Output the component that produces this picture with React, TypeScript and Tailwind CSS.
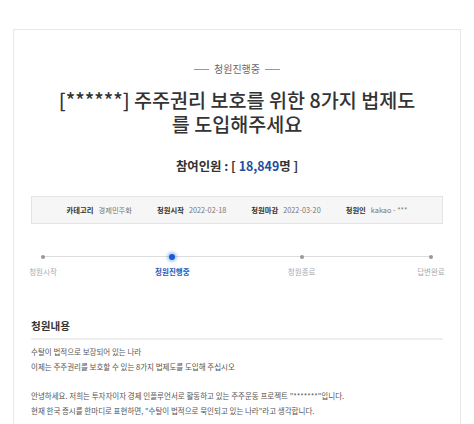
import React from "react";

const font = { fontFamily: '"Noto Sans CJK KR", "Noto Sans", sans-serif' };

function InfoItem({ label, value }: { label: string; value: string }) {
  return (
    <div className="flex items-center gap-[5px] whitespace-nowrap">
      <span className="font-bold text-[#333]">{label}</span>
      <span className="text-[#777]">{value}</span>
    </div>
  );
}

function Step({ label, active }: { label: string; active?: boolean }) {
  return (
    <div className="relative flex w-[40px] flex-col items-center">
      <div className="flex h-[9px] items-center justify-center">
        {active ? (
          <span className="block h-[6px] w-[6px] rounded-full bg-[#1d5ad0] shadow-[0_0_3px_2px_rgba(80,140,235,0.45)]" />
        ) : (
          <span className="block h-[4px] w-[4px] rounded-full bg-[#999]" />
        )}
      </div>
      <span
        className={
          active
            ? "mt-[6px] whitespace-nowrap text-[7.5px] leading-[10px] font-bold text-[#2b5bb8]"
            : "mt-[6px] whitespace-nowrap text-[7.5px] leading-[10px] text-[#aaa]"
        }
      >
        {label}
      </span>
    </div>
  );
}

export default function App() {
  return (
    <div className="h-[424px] w-[474px] overflow-hidden bg-white" style={font}>
      <div className="mx-[13px] mt-[29px] h-[400px] border border-b-0 border-[#e8e8e8] bg-white pt-[32px]">
        <div className="flex items-center justify-center gap-[5px] text-[10px] leading-[14px] text-[#666]">
          <span className="block h-px w-[15px] bg-[#999]" />
          <span>청원진행중</span>
          <span className="block h-px w-[15px] bg-[#999]" />
        </div>
        <h1 className="mt-[12px] text-center text-[19.6px] font-medium leading-[24px] text-[#333]">
          <span className="block">[******] 주주권리 보호를 위한 8가지 법제도</span>
          <span className="block">를 도입해주세요</span>
        </h1>
        <div className="mt-[21px] text-center text-[12.4px] font-bold leading-[18px] text-[#333]">
          참여인원 : [ <span className="text-[#1f4f9e]">18,849</span>명 ]
        </div>
        <div className="mx-[17px] mt-[21px] flex h-[28px] items-center justify-center gap-[25px] border border-[#e4e4e4] bg-[#f6f6f6] text-[7.3px]">
          <InfoItem label="카테고리" value="경제민주화" />
          <InfoItem label="청원시작" value="2022-02-18" />
          <InfoItem label="청원마감" value="2022-03-20" />
          <InfoItem label="청원인" value="kakao - ***" />
        </div>
        <div className="relative mx-[9px] mt-[28px] flex justify-between">
          <div className="absolute left-[20px] right-[20px] top-[4px] h-px bg-[#ddd]" />
          <Step label="청원시작" />
          <Step label="청원진행중" active />
          <Step label="청원종료" />
          <Step label="답변완료" />
        </div>
        <div className="mx-[17px] mt-[42px]">
          <h2 className="border-b-2 border-[#eee] pb-[5px] text-[10.6px] font-bold leading-[14px] text-[#333]">
            청원내용
          </h2>
          <div className="mt-[5px] text-[7.5px] leading-[14.8px] text-[#555]">
            <p>수탈이 법적으로 보장되어 있는 나라</p>
            <p>이제는 주주권리를 보호할 수 있는 8가지 법제도를 도입해 주십시오</p>
            <p>&nbsp;</p>
            <p>안녕하세요. 저희는 투자자이자 경제 인플루언서로 활동하고 있는 주주운동 프로젝트 "*******"입니다.</p>
            <p>현재 한국 증시를 한마디로 표현하면, "수탈이 법적으로 묵인되고 있는 나라"라고 생각합니다.</p>
          </div>
        </div>
      </div>
    </div>
  );
}
